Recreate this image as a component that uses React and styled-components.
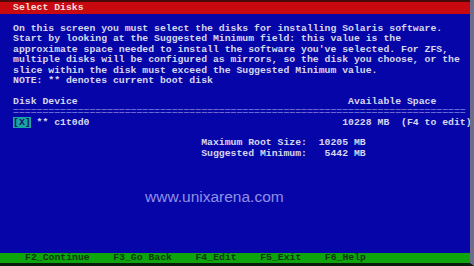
import React from "react";
import styled, { createGlobalStyle } from "styled-components";

const Global = createGlobalStyle`
  html, body { margin: 0; padding: 0; background: #000; }
  body { width: 474px; height: 266px; overflow: hidden; }
`;

const Screen = styled.div`
  position: relative;
  width: 470px;
  height: 263px;
  display: flex;
  flex-direction: column;
  background: #0606a8;
  border-right: 4px solid #6e6e8c;
  border-bottom: 3px solid #0c1c0c;
  font-family: "Liberation Mono", "DejaVu Sans Mono", monospace;
  font-size: 9.8px;
  font-weight: bold;
  overflow: hidden;
`;

const TitleBar = styled.div`
  height: 12px;
  flex: none;
  background: #c80a10;
  border-top: 2px solid #4a0a0a;
  color: #f4dede;
  padding-left: 13px;
  line-height: 11px;
  white-space: pre;
`;

const Body = styled.div`
  flex: 1;
  padding: 10px 0 0 13px;
  display: flex;
  flex-direction: column;
`;

const Line = styled.div`
  height: 10.4px;
  line-height: 10.4px;
  white-space: pre;
  color: ${(p) => (p.$dim ? "#6a6ad2" : "#d6d6ee")};
`;

const Gap = styled.div`
  height: ${(p) => p.$h}px;
  flex: none;
`;

const Check = styled.span`
  background: #1aa6a0;
  color: #0c1070;
`;

const Watermark = styled.div`
  position: absolute;
  left: 145px;
  top: 188px;
  font-family: "Liberation Sans", Arial, sans-serif;
  font-weight: normal;
  font-size: 15.5px;
  color: #9090e6;
  white-space: nowrap;
`;

const Footer = styled.div`
  height: 10px;
  flex: none;
  background: #0ea40e;
  color: #0c3a0c;
  line-height: 10px;
  white-space: pre;
  padding-left: 25px;
`;

const para = [
  "On this screen you must select the disks for installing Solaris software.",
  "Start by looking at the Suggested Minimum field: this value is the",
  "approximate space needed to install the software you've selected. For ZFS,",
  "multiple disks will be configured as mirrors, so the disk you choose, or the",
  "slice within the disk must exceed the Suggested Minimum value.",
  "NOTE: ** denotes current boot disk",
];

export default function App() {
  return (
    <>
      <Global />
      <Screen>
        <TitleBar>Select Disks</TitleBar>
        <Body>
          {para.map((t) => (
            <Line key={t}>{t}</Line>
          ))}
          <Gap $h={10.4} />
          <Line>{"Disk Device".padEnd(57) + "Available Space"}</Line>
          <Line $dim>{"=".repeat(77)}</Line>
          <Line>
            <Check>[X]</Check>
            {" ** c1t0d0".padEnd(53) + "10228 MB  (F4 to edit)"}
          </Line>
          <Gap $h={10.4} />
          <Line>{" ".repeat(32) + "Maximum Root Size:  10205 MB"}</Line>
          <Line>{" ".repeat(32) + "Suggested Minimum:   5442 MB"}</Line>
        </Body>
        <Watermark>www.unixarena.com</Watermark>
        <Footer>{"F2_Continue    F3_Go Back    F4_Edit    F5_Exit    F6_Help"}</Footer>
      </Screen>
    </>
  );
}
